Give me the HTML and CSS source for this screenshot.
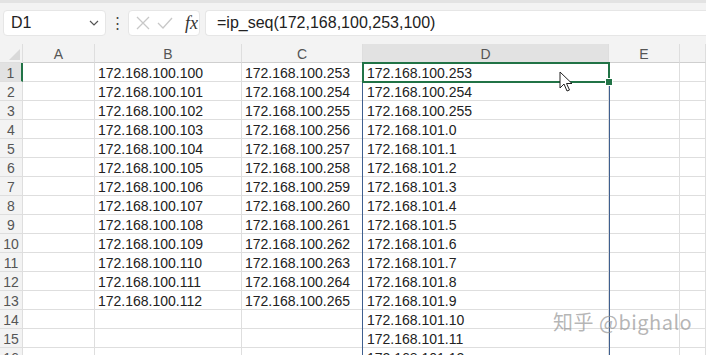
FILE: index.html
```html
<!DOCTYPE html>
<html lang="en">
<head>
    <meta charset="UTF-8">
    <title>Sheet</title>
    <link rel="stylesheet" href="styles.css">
</head>
<body>

    <!-- Formula bar -->
    <div class="toolbar">
        <div class="namebox">
            <span>D1</span>
            <svg width="10" height="6" viewBox="0 0 10 6"><path d="M1 1 L5 5 L9 1" fill="none" stroke="#555" stroke-width="1.2"/></svg>
        </div>
        <div class="dots">&#8942;</div>
        <div class="fxbox">
            <svg width="14" height="14" viewBox="0 0 14 14"><path d="M1 1 L13 13 M13 1 L1 13" stroke="#c8c8c8" stroke-width="1.3"/></svg>
            <svg width="16" height="14" viewBox="0 0 16 14"><path d="M1 7 L6 12 L15 2" fill="none" stroke="#c8c8c8" stroke-width="1.3"/></svg>
            <span class="fx">fx</span>
        </div>
        <div class="formula">=ip_seq(172,168,100,253,100)</div>
    </div>

    <!-- Sheet grid -->
    <div class="sheet">
        <div class="grid">
            <div class="corner"><span class="tri"></span></div>
            <div class="colhead">A</div>
            <div class="colhead">B</div>
            <div class="colhead">C</div>
            <div class="colhead active">D</div>
            <div class="colhead">E</div>
            <div class="colhead"></div>

            <div class="rowhead active">1</div><div class="cell"></div><div class="cell">172.168.100.100</div><div class="cell">172.168.100.253</div><div class="cell d">172.168.100.253</div><div class="cell"></div><div class="cell"></div>
            <div class="rowhead">2</div><div class="cell"></div><div class="cell">172.168.100.101</div><div class="cell">172.168.100.254</div><div class="cell d">172.168.100.254</div><div class="cell"></div><div class="cell"></div>
            <div class="rowhead">3</div><div class="cell"></div><div class="cell">172.168.100.102</div><div class="cell">172.168.100.255</div><div class="cell d">172.168.100.255</div><div class="cell"></div><div class="cell"></div>
            <div class="rowhead">4</div><div class="cell"></div><div class="cell">172.168.100.103</div><div class="cell">172.168.100.256</div><div class="cell d">172.168.101.0</div><div class="cell"></div><div class="cell"></div>
            <div class="rowhead">5</div><div class="cell"></div><div class="cell">172.168.100.104</div><div class="cell">172.168.100.257</div><div class="cell d">172.168.101.1</div><div class="cell"></div><div class="cell"></div>
            <div class="rowhead">6</div><div class="cell"></div><div class="cell">172.168.100.105</div><div class="cell">172.168.100.258</div><div class="cell d">172.168.101.2</div><div class="cell"></div><div class="cell"></div>
            <div class="rowhead">7</div><div class="cell"></div><div class="cell">172.168.100.106</div><div class="cell">172.168.100.259</div><div class="cell d">172.168.101.3</div><div class="cell"></div><div class="cell"></div>
            <div class="rowhead">8</div><div class="cell"></div><div class="cell">172.168.100.107</div><div class="cell">172.168.100.260</div><div class="cell d">172.168.101.4</div><div class="cell"></div><div class="cell"></div>
            <div class="rowhead">9</div><div class="cell"></div><div class="cell">172.168.100.108</div><div class="cell">172.168.100.261</div><div class="cell d">172.168.101.5</div><div class="cell"></div><div class="cell"></div>
            <div class="rowhead">10</div><div class="cell"></div><div class="cell">172.168.100.109</div><div class="cell">172.168.100.262</div><div class="cell d">172.168.101.6</div><div class="cell"></div><div class="cell"></div>
            <div class="rowhead">11</div><div class="cell"></div><div class="cell">172.168.100.110</div><div class="cell">172.168.100.263</div><div class="cell d">172.168.101.7</div><div class="cell"></div><div class="cell"></div>
            <div class="rowhead">12</div><div class="cell"></div><div class="cell">172.168.100.111</div><div class="cell">172.168.100.264</div><div class="cell d">172.168.101.8</div><div class="cell"></div><div class="cell"></div>
            <div class="rowhead">13</div><div class="cell"></div><div class="cell">172.168.100.112</div><div class="cell">172.168.100.265</div><div class="cell d">172.168.101.9</div><div class="cell"></div><div class="cell"></div>
            <div class="rowhead">14</div><div class="cell"></div><div class="cell"></div><div class="cell"></div><div class="cell d">172.168.101.10</div><div class="cell"></div><div class="cell"></div>
            <div class="rowhead">15</div><div class="cell"></div><div class="cell"></div><div class="cell"></div><div class="cell d">172.168.101.11</div><div class="cell"></div><div class="cell"></div>
            <div class="rowhead">16</div><div class="cell"></div><div class="cell"></div><div class="cell"></div><div class="cell d">172.168.101.12</div><div class="cell"></div><div class="cell"></div>
        </div>

        <!-- overlays -->
        <div class="spill"></div>
        <div class="selection"><span class="handle"></span></div>
        <svg class="cursor" width="14" height="22" viewBox="0 0 14 22">
            <path d="M1 1 L1 17 L5 13 L8 20 L10.5 19 L7.5 12.5 L13 12.5 Z" fill="#fff" stroke="#222" stroke-width="1" stroke-linejoin="round"/>
        </svg>
        <div class="watermark">知乎 @bighalo</div>
    </div>

</body>
</html>
```

FILE: styles.css
```css
body {
    margin: 0;
    font-family: "Liberation Sans", Arial, sans-serif;
    background-color: #f3f3f3;
    width: 706px;
    height: 355px;
    overflow: hidden;
}

.toolbar {
    height: 44px;
    box-sizing: border-box;
    border-top: 3px solid #e3e3e3;
    padding: 7px 0 0 3px;
    display: flex;
    align-items: flex-start;
    background-color: #f3f3f3;
}

.namebox {
    width: 103px;
    height: 26px;
    box-sizing: border-box;
    background: #fff;
    border: 1px solid #e6e6e6;
    border-radius: 4px;
    display: flex;
    align-items: center;
    justify-content: space-between;
    padding: 0 6px 0 7px;
    font-size: 16px;
    color: #222;
}

.dots {
    width: 22px;
    text-align: center;
    line-height: 26px;
    font-size: 15px;
    color: #444;
}

.fxbox {
    width: 72px;
    height: 26px;
    box-sizing: border-box;
    background: #fff;
    border: 1px solid #e6e6e6;
    border-radius: 4px;
    display: flex;
    align-items: center;
    gap: 7px;
    padding-left: 7px;
}

.fx {
    font-family: "Liberation Serif", "Times New Roman", serif;
    font-style: italic;
    font-size: 18px;
    color: #333;
    margin-left: 5px;
}

.formula {
    flex: 1;
    height: 26px;
    margin-left: 5px;
    box-sizing: border-box;
    background: #fff;
    border: 1px solid #e6e6e6;
    border-right: none;
    border-radius: 4px 0 0 4px;
    padding-left: 11px;
    line-height: 24px;
    font-size: 16px;
    color: #222;
}

.sheet {
    position: relative;
    background: #fff;
    height: 311px;
    overflow: hidden;
}

.grid {
    display: grid;
    grid-template-columns: 23px 72px 147px 121px 246px 71px 1fr;
    grid-auto-rows: 19px;
}

.grid > div {
    box-sizing: border-box;
    border-right: 1px solid #dedede;
    border-bottom: 1px solid #dedede;
    font-size: 14px;
    line-height: 17px;
    padding-top: 2px;
    white-space: nowrap;
    overflow: hidden;
}

.corner {
    background: #f3f3f3;
    position: relative;
}

.tri {
    position: absolute;
    right: 2px;
    bottom: 2px;
    border-left: 11px solid transparent;
    border-bottom: 11px solid #d9d9d9;
}

.colhead {
    background: #f3f3f3;
    text-align: center;
    color: #555;
    border-bottom-color: #cfcfcf !important;
}

.colhead.active {
    background: #e2e2e2;
}

.rowhead {
    background: #f3f3f3;
    text-align: center;
    color: #555;
}

.rowhead.active {
    background: #e2e2e2;
    border-right: 2px solid #217346 !important;
}

.cell {
    padding-left: 3px;
    color: #222;
    background: #fff;
}

.cell.d {
    padding-left: 4px;
}

.spill {
    position: absolute;
    left: 362px;
    top: 38px;
    width: 248px;
    height: 300px;
    box-sizing: border-box;
    border-left: 1px solid #3f5f8f;
    border-right: 1px solid #3f5f8f;
}

.selection {
    position: absolute;
    left: 362px;
    top: 18px;
    width: 248px;
    height: 21px;
    box-sizing: border-box;
    border: 2px solid #217346;
}

.handle {
    position: absolute;
    right: -5px;
    bottom: -5px;
    width: 6px;
    height: 6px;
    background: #217346;
    border: 1px solid #fff;
}

.cursor {
    position: absolute;
    left: 559px;
    top: 27px;
}

.watermark {
    position: absolute;
    left: 553px;
    top: 263px;
    font-family: "Noto Sans CJK SC", "Liberation Sans", sans-serif;
    font-size: 20px;
    color: rgba(150, 150, 150, 0.7);
    letter-spacing: 0.5px;
}
```
